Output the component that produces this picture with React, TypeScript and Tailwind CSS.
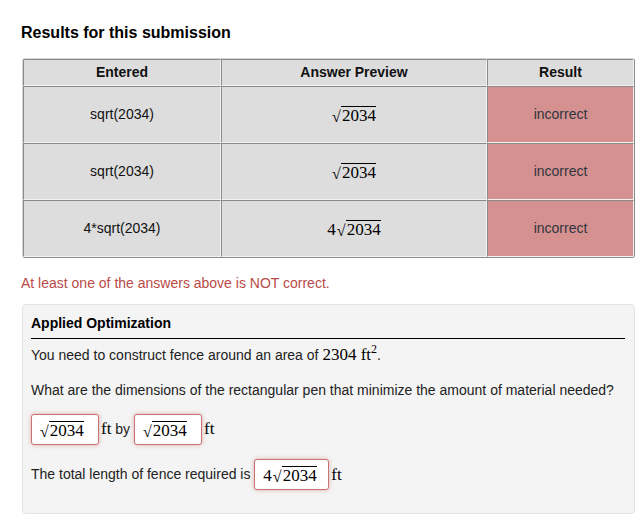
import React from "react";

function Sqrt({ n, coef }: { n: string; coef?: string }) {
  return (
    <span className="inline-flex items-end font-['Liberation_Serif',serif] text-[17px] leading-none text-black">
      {coef && <span className="mr-[1px]">{coef}</span>}
      <span className="relative top-[1px] text-[16px] leading-none">√</span>
      <span className="border-t border-black pt-[1px] pl-[1px] leading-[16px]">{n}</span>
    </span>
  );
}

function Cell({
  children,
  bad,
  bold,
  h,
}: {
  children: React.ReactNode;
  bad?: boolean;
  bold?: boolean;
  h: string;
}) {
  return (
    <div
      className={
        "flex items-center justify-center border border-t-[#8a8a8a] border-l-[#8a8a8a] border-b-[#f2f2f2] border-r-[#f2f2f2] " +
        h +
        (bad ? " bg-[#d59090] text-[#2f3640]" : " bg-[#dddddd] text-[#111]") +
        (bold ? " font-bold" : "")
      }
    >
      {children}
    </div>
  );
}

function AnsBox({ children, w }: { children: React.ReactNode; w: string }) {
  return (
    <span
      className={
        "inline-flex h-[31px] items-center rounded-[3px] border border-[#c97474] bg-white pl-[8px] shadow-[0_0_4px_rgba(190,80,80,0.45)] " +
        w
      }
    >
      {children}
    </span>
  );
}

export default function App() {
  const rows = [
    { e: "sqrt(2034)", p: <Sqrt n="2034" /> },
    { e: "sqrt(2034)", p: <Sqrt n="2034" /> },
    { e: "4*sqrt(2034)", p: <Sqrt n="2034" coef="4" /> },
  ];
  return (
    <div className="h-[522px] w-[642px] bg-white font-['Liberation_Sans',Arial,sans-serif] text-[14px] text-[#222]">
      <div className="pl-[22px] pt-[24px]">
        <h2 className="-ml-px text-[16px] font-bold leading-[18px] text-black">
          Results for this submission
        </h2>

        <div className="mt-[16px] w-[613px] overflow-hidden rounded-[3px] border border-t-[#d6d6d6] border-l-[#d6d6d6] border-b-[#8a8a8a] border-r-[#8a8a8a] bg-white">
          <div className="grid grid-cols-[198px_266px_147px]">
            <Cell h="h-[27px]" bold>
              Entered
            </Cell>
            <Cell h="h-[27px]" bold>
              Answer Preview
            </Cell>
            <Cell h="h-[27px]" bold>
              Result
            </Cell>
            {rows.map((r, i) => (
              <React.Fragment key={i}>
                <Cell h="h-[57px]">{r.e}</Cell>
                <Cell h="h-[57px]">{r.p}</Cell>
                <Cell h="h-[57px]" bad>
                  incorrect
                </Cell>
              </React.Fragment>
            ))}
          </div>
        </div>

        <div className="-ml-px mt-[17px] leading-[16px] text-[#b94a48]">
          At least one of the answers above is NOT correct.
        </div>

        <div className="mt-[13px] h-[210px] w-[613px] rounded-[4px] border border-[#e3e3e3] bg-[#f4f4f4] pl-[8px] pr-[9px] pt-[10px]">
          <div className="font-bold leading-[16px] text-black">Applied Optimization</div>
          <div className="mt-[7px] h-px bg-black" />
          <div className="mt-[6px] flex h-[20px] items-center">
            <span>You need to construct fence around an area of&nbsp;</span>
            <span className="font-['Liberation_Serif',serif] text-[17px] text-black">2304 ft</span>
            <span className="relative -top-[6px] font-['Liberation_Serif',serif] text-[12px] text-black">2</span>
            <span>.</span>
          </div>
          <div className="mt-[17px] flex h-[16px] items-center">
            What are the dimensions of the rectangular pen that minimize the amount of material needed?
          </div>
          <div className="mt-[16px] flex h-[31px] items-center">
            <AnsBox w="w-[68px]">
              <Sqrt n="2034" />
            </AnsBox>
            <span className="relative -top-[1px] ml-[2px] font-['Liberation_Serif',serif] text-[17px] text-black">ft</span>
            <span>&nbsp;by&nbsp;</span>
            <AnsBox w="w-[68px]">
              <Sqrt n="2034" />
            </AnsBox>
            <span className="relative -top-[1px] ml-[2px] font-['Liberation_Serif',serif] text-[17px] text-black">ft</span>
          </div>
          <div className="mt-[14px] flex h-[31px] items-center">
            <span>The total length of fence required is&nbsp;</span>
            <AnsBox w="w-[75px]">
              <Sqrt n="2034" coef="4" />
            </AnsBox>
            <span className="ml-[2px] font-['Liberation_Serif',serif] text-[17px] text-black">ft</span>
          </div>
        </div>
      </div>
    </div>
  );
}
